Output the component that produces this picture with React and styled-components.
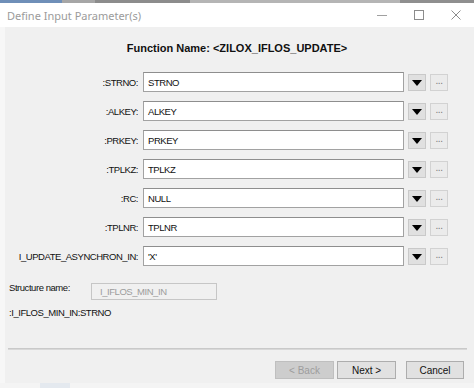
import React from "react";
import styled, { createGlobalStyle, css } from "styled-components";

const Global = createGlobalStyle`
  html, body { margin: 0; padding: 0; }
  body { width: 474px; height: 388px; overflow: hidden; background: #f0f0f0; }
  * { box-sizing: border-box; }
`;

const compact = css`
  font-family: "Liberation Sans", Arial, sans-serif;
  font-size: 9.5px;
  letter-spacing: -0.45px;
`;

const Win = styled.div`
  width: 474px;
  height: 388px;
  display: flex;
  flex-direction: column;
  font-family: "Liberation Sans", Arial, sans-serif;
  color: #111;
`;

const TopStrip = styled.div`
  height: 3px;
  background: linear-gradient(to right, #6f8fb8 0 62px, #a6a6a6 62px 95px, #8c8c8c 95px 190px, #b5b5b5 190px 400px, #8f8f8f 400px);
`;

const TitleBar = styled.div`
  height: 24px;
  background: #ffffff;
  display: flex;
  align-items: center;
  padding-left: 7px;
`;

const TitleText = styled.div`
  flex: 1;
  font-family: "Noto Sans", "Liberation Sans", sans-serif;
  font-size: 11px;
  color: #9b9b9b;
  padding-top: 1px;
`;

const Ctrl = styled.div`
  width: 37px;
  height: 24px;
  display: flex;
  align-items: center;
  justify-content: center;
`;

const Body = styled.div`
  flex: 1;
  display: flex;
  flex-direction: column;
  background: linear-gradient(to right, #f7f7f7 0 5px, #f0f0f0 5px);
`;

const Heading = styled.div`
  margin-top: 14px;
  height: 14px;
  line-height: 14px;
  text-align: center;
  font-family: "Liberation Sans", Arial, sans-serif;
  font-weight: bold;
  font-size: 11px;
  color: #111;
`;

const Params = styled.div`
  margin-top: 17px;
  display: grid;
  grid-template-columns: 139px 261px 18px 18px;
  grid-auto-rows: 20px;
  column-gap: 4px;
  row-gap: 9px;
  align-items: center;
`;

const Label = styled.div`
  ${compact}
  text-align: right;
  padding-right: 1px;
  white-space: nowrap;
`;

const Field = styled.div`
  ${compact}
  height: 20px;
  background: #fff;
  border: 1px solid #a2a2a2;
  border-top-color: #8e8e8e;
  display: flex;
  align-items: center;
  padding-left: 4px;
  color: #111;
`;

const DropBtn = styled.div`
  width: 18px;
  height: 17px;
  background: #e0e0e0;
  border: 1px solid #c9c9c9;
  display: flex;
  align-items: center;
  justify-content: center;
`;

const Triangle = styled.div`
  width: 0;
  height: 0;
  border-left: 5px solid transparent;
  border-right: 5px solid transparent;
  border-top: 6px solid #000;
  margin-top: 1px;
`;

const DotsBtn = styled.div`
  width: 18px;
  height: 17px;
  background: #ebebeb;
  border: 1px solid #d2d2d2;
  display: flex;
  align-items: center;
  justify-content: center;
  font-family: "Liberation Sans", Arial, sans-serif;
  font-size: 10px;
  letter-spacing: -0.5px;
  color: #7a7a7a;
  line-height: 1;
  padding-bottom: 3px;
`;

const StructRow = styled.div`
  margin-top: 17px;
  display: flex;
  align-items: flex-start;
  padding-left: 9px;
`;

const StructLabel = styled.div`
  ${compact}
  width: 82px;
  line-height: 10px;
`;

const DisabledField = styled.div`
  ${compact}
  width: 126px;
  height: 17px;
  border: 1px solid #c6c6c6;
  background: #f0f0f0;
  display: flex;
  align-items: center;
  padding-left: 8px;
  color: #9c9c9c;
`;

const PathText = styled.div`
  ${compact}
  margin-top: 7px;
  padding-left: 9px;
  line-height: 12px;
`;

const Spacer = styled.div`
  flex: 1;
`;

const Separator = styled.div`
  height: 2px;
  margin: 0 7px 0 8px;
  background: #c9c9c9;
  border-bottom: 1px solid #d8d8d8;
`;

const Footer = styled.div`
  margin-top: 11px;
  padding-bottom: 4px;
  display: flex;
  justify-content: flex-end;
  padding-right: 10px;
`;

const Btn = styled.div`
  width: ${(p) => p.$w}px;
  height: 18px;
  margin-left: ${(p) => p.$ml}px;
  background: ${(p) => (p.$disabled ? "#cdcdcd" : "#e1e1e1")};
  border: 1px solid ${(p) => (p.$disabled ? "#bfbfbf" : "#adadad")};
  color: ${(p) => (p.$disabled ? "#9d9d9d" : "#111")};
  display: flex;
  align-items: center;
  justify-content: center;
  font-family: "Liberation Sans", Arial, sans-serif;
  font-size: 10px;
`;

const BottomStrip = styled.div`
  height: 5px;
  background: linear-gradient(to right, #f4f4f4 0 40px, #e4e9ef 40px 70px, #f4f4f4 70px);
`;

const params = [
  [":STRNO:", "STRNO"],
  [":ALKEY:", "ALKEY"],
  [":PRKEY:", "PRKEY"],
  [":TPLKZ:", "TPLKZ"],
  [":RC:", "NULL"],
  [":TPLNR:", "TPLNR"],
  ["I_UPDATE_ASYNCHRON_IN:", "'X'"],
];

export default function App() {
  return (
    <>
      <Global />
      <Win>
        <TopStrip />
        <TitleBar>
          <TitleText>Define Input Parameter(s)</TitleText>
          <Ctrl>
            <svg width="10" height="10" viewBox="0 0 10 10">
              <line x1="0" y1="5.5" x2="10" y2="5.5" stroke="#a0a0a0" strokeWidth="1" />
            </svg>
          </Ctrl>
          <Ctrl>
            <svg width="10" height="10" viewBox="0 0 10 10">
              <rect x="0.5" y="0.5" width="9" height="9" fill="none" stroke="#8c8c8c" strokeWidth="1" />
            </svg>
          </Ctrl>
          <Ctrl>
            <svg width="10" height="10" viewBox="0 0 10 10">
              <path d="M0.5 0.5 L9.5 9.5 M9.5 0.5 L0.5 9.5" stroke="#8c8c8c" strokeWidth="1" />
            </svg>
          </Ctrl>
        </TitleBar>
        <Body>
          <Heading>Function Name: &lt;ZILOX_IFLOS_UPDATE&gt;</Heading>
          <Params>
            {params.map(([l, v]) => (
              <React.Fragment key={l}>
                <Label>{l}</Label>
                <Field>{v}</Field>
                <DropBtn>
                  <Triangle />
                </DropBtn>
                <DotsBtn>...</DotsBtn>
              </React.Fragment>
            ))}
          </Params>
          <StructRow>
            <StructLabel>Structure name:</StructLabel>
            <DisabledField>I_IFLOS_MIN_IN</DisabledField>
          </StructRow>
          <PathText>:I_IFLOS_MIN_IN:STRNO</PathText>
          <Spacer />
          <Separator />
          <Footer>
            <Btn $w={59} $ml={0} $disabled>&lt; Back</Btn>
            <Btn $w={59} $ml={3}>Next &gt;</Btn>
            <Btn $w={58} $ml={10}>Cancel</Btn>
          </Footer>
        </Body>
        <BottomStrip />
      </Win>
    </>
  );
}
